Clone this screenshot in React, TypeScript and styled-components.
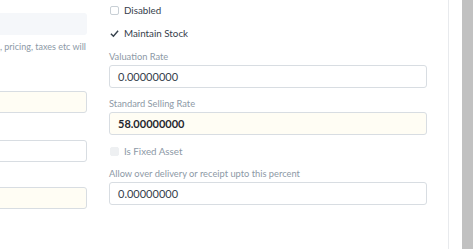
import React from "react";
import styled, { createGlobalStyle } from "styled-components";

const Global = createGlobalStyle`
  html, body { margin: 0; padding: 0; background: #ffffff; }
  body { font-family: "Lato", "Open Sans", sans-serif; -webkit-font-smoothing: antialiased; }
  #root { height: 249px; }
`;

const Page = styled.div`
  display: flex;
  width: 474px;
  height: 249px;
  overflow: hidden;
  background: #fff;
`;

const Content = styled.div`
  display: flex;
  gap: 22px;
  width: 449px;
  flex: none;
  border-right: 1px solid #e8eaed;
  overflow: hidden;
  box-sizing: border-box;
`;

const Gutter = styled.div`
  width: 13px;
  flex: none;
  background: #fff;
`;

const ScrollBar = styled.div`
  width: 11px;
  flex: none;
  background: #c1c1c1;
`;

const LeftCol = styled.div`
  width: 300px;
  margin-left: -213px;
  flex: none;
  display: flex;
  flex-direction: column;
`;

const RightCol = styled.div`
  width: 318px;
  flex: none;
  display: flex;
  flex-direction: column;
`;

const ReadOnlyBox = styled.div`
  margin-top: 13px;
  height: 22px;
  background: #f5f7fa;
  border-radius: 3px;
`;

const Help = styled.div`
  margin-top: 6px;
  font-size: 9px;
  line-height: 12px;
  color: #8d99a6;
  white-space: nowrap;
  text-align: right;
  padding-right: 1px;
`;

const Input = styled.div<{ $bold?: boolean; $mt?: number; $h?: number }>`
  box-sizing: border-box;
  height: ${(p) => p.$h ?? 23}px;
  margin-top: ${(p) => p.$mt ?? 0}px;
  border: 1px solid #d8dde2;
  border-radius: 3px;
  background: ${(p) => (p.$bold ? "#fffdf4" : "#ffffff")};
  display: flex;
  align-items: center;
  padding-left: 8px;
  font-size: 11px;
  color: ${(p) => (p.$bold ? "#1f272e" : "#36414c")};
  font-weight: ${(p) => (p.$bold ? 700 : 400)};
`;

const CheckRow = styled.div<{ $mt: number; $muted?: boolean }>`
  display: flex;
  align-items: center;
  gap: 5px;
  height: 16px;
  margin-top: ${(p) => p.$mt}px;
  padding-left: 1px;
  font-size: 9.8px;
  color: ${(p) => (p.$muted ? "#8d99a6" : "#36414c")};
`;

const Box = styled.span<{ $disabled?: boolean }>`
  width: 9px;
  height: 9px;
  box-sizing: border-box;
  border-radius: 2px;
  border: 1px solid ${(p) => (p.$disabled ? "#eef0f2" : "#c8cfd5")};
  background: ${(p) => (p.$disabled ? "#eef0f2" : "#ffffff")};
  flex: none;
`;

const Tick = styled.svg`
  width: 9px;
  height: 9px;
  flex: none;
`;

const Field = styled.div<{ $mt: number }>`
  margin-top: ${(p) => p.$mt}px;
  display: flex;
  flex-direction: column;
  gap: 2px;
`;

const Label = styled.div`
  height: 12px;
  line-height: 12px;
  font-size: 9.3px;
  color: #8d99a6;
  white-space: nowrap;
`;

export default function App() {
  return (
    <>
      <Global />
      <Page>
        <Content>
          <LeftCol>
            <ReadOnlyBox />
            <Help>, pricing, taxes etc will</Help>
            <Input $bold $mt={38} $h={22} />
            <Input $mt={27} $h={22} />
            <Input $bold $mt={25} $h={22} />
          </LeftCol>
          <RightCol>
            <CheckRow $mt={2}>
              <Box />
              <span>Disabled</span>
            </CheckRow>
            <CheckRow $mt={7}>
              <Tick viewBox="0 0 10 10">
                <path d="M1 5.2 L3.8 8 L9 2" fill="none" stroke="#36414c" strokeWidth="1.6" />
              </Tick>
              <span>Maintain Stock</span>
            </CheckRow>
            <Field $mt={10}>
              <Label>Valuation Rate</Label>
              <Input>0.00000000</Input>
            </Field>
            <Field $mt={10}>
              <Label>Standard Selling Rate</Label>
              <Input $bold>58.00000000</Input>
            </Field>
            <CheckRow $mt={8} $muted>
              <Box $disabled />
              <span>Is Fixed Asset</span>
            </CheckRow>
            <Field $mt={9}>
              <Label>Allow over delivery or receipt upto this percent</Label>
              <Input>0.00000000</Input>
            </Field>
          </RightCol>
        </Content>
        <Gutter />
        <ScrollBar />
      </Page>
    </>
  );
}
